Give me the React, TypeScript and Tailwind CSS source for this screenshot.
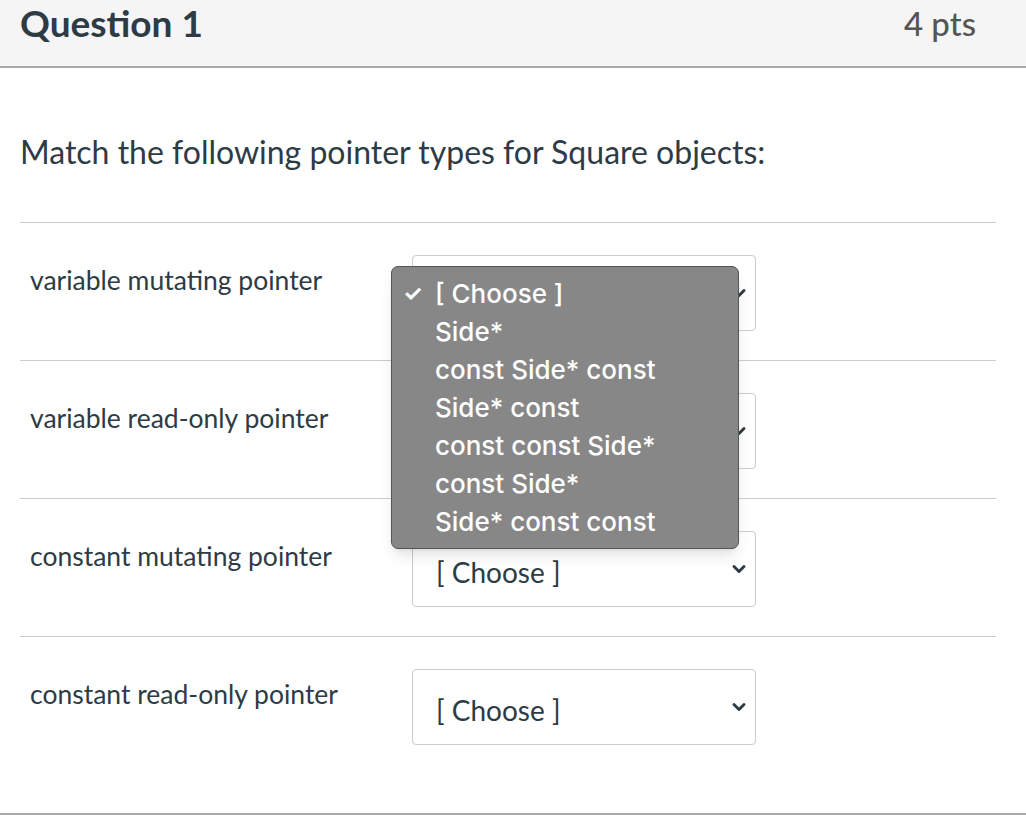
import { ChevronDown } from "lucide-react";

const rows = [
  "variable mutating pointer",
  "variable read-only pointer",
  "constant mutating pointer",
  "constant read-only pointer",
];

const options = [
  "[ Choose ]",
  "Side*",
  "const Side* const",
  "Side* const",
  "const const Side*",
  "const Side*",
  "Side* const const",
];

export default function App() {
  return (
    <div className="relative w-[1026px] h-[820px] bg-white text-[#2d3b45] overflow-hidden" style={{ fontFamily: "Lato, 'Noto Sans', sans-serif" }}>
      {/* Header */}
      <div className="h-[68px] bg-[#f5f5f5] border-b-2 border-[#aaaaaa] flex items-start justify-between px-[20px] pt-[1px]">
        <h1 className="text-[37px] font-bold leading-[44px]">Question 1</h1>
        <span className="text-[33px] font-medium text-[#555] leading-[44px] pr-[30px]">4 pts</span>
      </div>

      <div className="px-[20px] pr-[30px]">
        <p className="text-[32px] leading-[40px] mt-[64px] mb-[50px]">Match the following pointer types for Square objects:</p>

        <div className="border-t border-[#c7cdd1]">
          {rows.map((r) => (
            <div key={r} className="h-[138px] border-b border-[#c7cdd1] last:border-b-0 flex items-start">
              <div className="w-[392px] pl-[10px] pt-[40px] text-[26.5px] leading-[34px]">{r}</div>
              <div className="mt-[32px] w-[344px] h-[76px] border border-[#c7cdd1] rounded-[4px] flex items-center justify-between pl-[23px] pr-[6px]">
                <span className="text-[28px] pt-[6px]">[ Choose ]</span>
                <ChevronDown className="size-[20px] text-[#2d3b45]" strokeWidth={3.5} />
              </div>
            </div>
          ))}
        </div>
      </div>

      <div className="absolute left-0 right-0 top-[813px] border-t-2 border-[#aaaaaa]" />

      {/* Open select menu */}
      <div
        className="absolute left-[391px] top-[266px] w-[348px] h-[283px] bg-[#878787] border border-[#555] rounded-[7px] shadow-lg pt-[7px] text-white"
        style={{ fontFamily: "Inter, 'Liberation Sans', Arial, sans-serif" }}
      >
        {options.map((o, i) => (
          <div key={o} className="flex items-center h-[38px] text-[26px] font-medium">
            <span className="w-[43px] pl-[11px] text-[22px] font-bold">{i === 0 ? "✓" : ""}</span>
            <span>{o}</span>
          </div>
        ))}
      </div>
    </div>
  );
}
